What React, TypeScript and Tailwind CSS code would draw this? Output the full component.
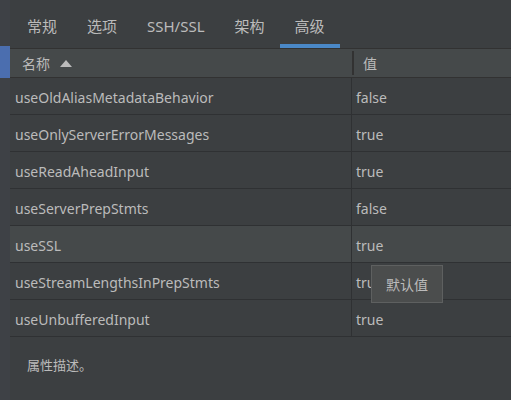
import { useState } from 'react';

const TABS = ['常规', '选项', 'SSH/SSL', '架构', '高级'];

const ROWS = [
  { name: 'useOldAliasMetadataBehavior', value: 'false' },
  { name: 'useOnlyServerErrorMessages', value: 'true' },
  { name: 'useReadAheadInput', value: 'true' },
  { name: 'useServerPrepStmts', value: 'false' },
  { name: 'useSSL', value: 'true' },
  { name: 'useStreamLengthsInPrepStmts', value: 'true' },
  { name: 'useUnbufferedInput', value: 'true' },
];

export default function App() {
  const [active, setActive] = useState(4);
  const [hover] = useState(4);

  return (
    <div
      className="flex w-[511px] h-[400px] bg-[#3c3f41] text-[#bbbbbb] text-[14px] overflow-hidden"
      style={{ fontFamily: '"Noto Sans", "Noto Sans CJK SC", sans-serif' }}
    >
      {/* Barre latérale */}
      <div className="w-[10px] shrink-0 bg-[#3e4146] flex flex-col">
        <div className="h-[46px]" />
        <div className="h-[32px] bg-[#4b6eaf]" />
      </div>

      <div className="flex-1 flex flex-col min-w-0">
        {/* Onglets */}
        <div className="h-[48px] flex items-stretch pl-[2px] text-[15px]">
          {TABS.map((t, i) => (
            <button
              key={t}
              onClick={() => setActive(i)}
              className="relative px-[15px] pt-[4px] flex items-center"
            >
              <span>{t}</span>
              {active === i && (
                <span className="absolute left-0 right-0 bottom-0 h-[4px] bg-[#4a88c7]" />
              )}
            </button>
          ))}
        </div>
        <div className="h-[1px] bg-[#323232]" />

        {/* En-tête du tableau */}
        <div className="h-[29px] flex bg-[#45494a] border-b border-[#323232]">
          <div className="w-[342px] flex items-center pl-[12px] gap-[10px]">
            <span>名称</span>
            <svg width="12" height="7" viewBox="0 0 12 7">
              <path d="M6 0 L12 7 L0 7 Z" fill="#bbbbbb" />
            </svg>
          </div>
          <div className="w-[2px] my-[2px] bg-[#323232]" />
          <div className="flex-1 flex items-center pl-[9px]">值</div>
        </div>

        {/* Lignes */}
        {ROWS.map((r, i) => (
          <div
            key={r.name}
            className={`h-[37px] flex border-b border-[#2f3133] ${hover === i ? 'bg-[#45494a]' : ''}`}
          >
            <div className="w-[341px] flex items-center pl-[5px] pt-[3px] truncate">{r.name}</div>
            <div className="w-[1px] bg-[#2f3133]" />
            <div className="flex-1 flex items-center pl-[4px] pt-[3px] relative">
              {r.value}
              {i === 5 && (
                <div className="absolute left-[19px] top-[2px] w-[72px] h-[38px] pt-[1px] bg-[#4b4d4d] border border-[#5e6060] flex items-center justify-center z-10">
                  默认值
                </div>
              )}
            </div>
          </div>
        ))}

        {/* Description */}
        <div className="pl-[17px] pt-[19px] text-[13px]">属性描述。</div>
      </div>
    </div>
  );
}
